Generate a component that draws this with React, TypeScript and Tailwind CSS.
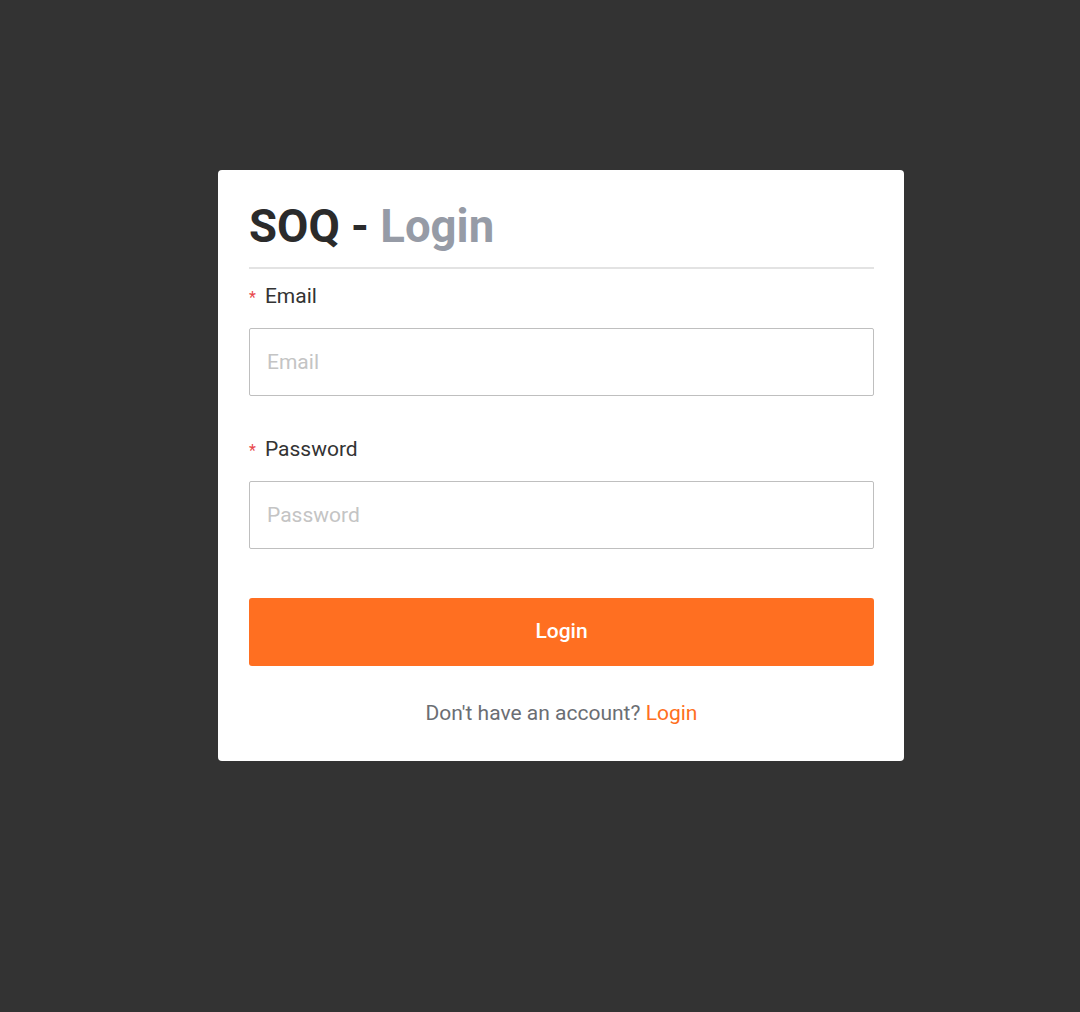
const Field = ({ label, type }: { label: string; type: string }) => (
  <div className="flex flex-col gap-[17px]">
    <label className="flex items-center gap-[9px] text-[21px] leading-[30px] text-[#333333]">
      <span className="text-[16px] text-[#e8474b] translate-y-[2px]">*</span>
      {label}
    </label>
    <input
      type={type}
      placeholder={label}
      className="block w-full h-[68px] px-[17px] border border-[#bfbfbf] rounded-[2px] text-[21px] text-[#333] placeholder:text-[#c4c4c4] outline-none"
    />
  </div>
);

const App = () => {
  return (
    <div
      className="w-full min-h-[1012px] bg-[#333333] pt-[170px] pl-[218px]"
      style={{ fontFamily: "Roboto, 'Liberation Sans', sans-serif" }}
    >
      <div className="w-[686px] bg-white rounded-[4px] pl-[31px] pr-[30px] pt-[29px] pb-[33px] flex flex-col">
        <h1 className="text-[45.5px] leading-[55px] font-bold text-[#2b2b2b] pb-[13px] border-b-2 border-[#e3e3e3]">
          SOQ - <span className="text-[#969ba6]">Login</span>
        </h1>
        <div className="mt-[12px]">
          <Field label="Email" type="email" />
        </div>
        <div className="mt-[38px]">
          <Field label="Password" type="password" />
        </div>
        <button className="mt-[49px] h-[68px] w-full bg-[#ff6f21] rounded-[3px] text-white text-[21px] font-medium">
          Login
        </button>
        <p className="mt-[32px] text-center text-[21px] leading-[30px] text-[#6b6e73]">
          Don't have an account?{" "}
          <a href="#" className="text-[#ff6f21]">
            Login
          </a>
        </p>
      </div>
    </div>
  );
};

export default App;
